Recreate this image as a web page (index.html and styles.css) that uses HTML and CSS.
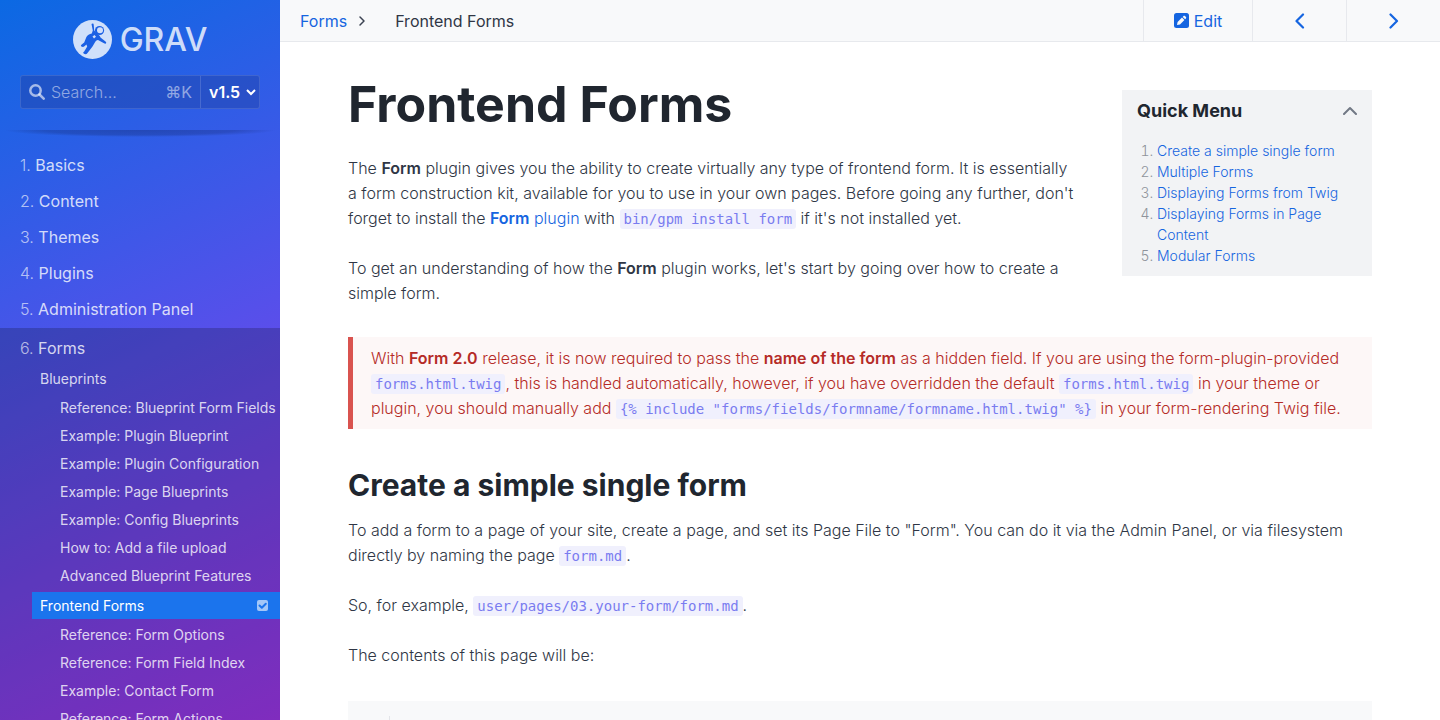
FILE: index.html
```html
<!DOCTYPE html>
<html lang="en">
<head>
  <meta charset="UTF-8">
  <meta name="viewport" content="width=device-width, initial-scale=1.0">
  <title>Frontend Forms</title>
  <link rel="stylesheet" href="styles.css">
</head>
<body>
  <aside class="sidebar">
    <header class="sidebar-header">
      <a class="logo" href="#">
        <svg class="logo-mark" viewBox="0 0 39 39" aria-hidden="true">
          <circle cx="19.5" cy="19.5" r="19.5" fill="currentColor"/>
          <g class="astronaut">
            <path d="M18.500 4c1-1 2.200-.6 2.200.8l.5 5.700 2.300 2.500c2 2 3.500 2.500 4 4.500l5 4c1.500 1.300.5 2.600-1 2l-6.500-3.500c-1.500 0-2.500 1-3 2.300l-2.500 4.200-5 6.500c-1 1.500-2.500 1.500-3.800.5-.8-.8-.5-1.500.5-2l3-5-.8-2-2 1.800c-1 1-2 .8-3 .2-.8-.7-.5-1.500.3-2l2.500-2 2.200-5.500c1-2 3-3 5.400-3.500l1-3z"/>
            <circle cx="26.500" cy="10.500" r="4.600"/>
            <circle class="visor" cx="27" cy="10.300" r="3"/>
            <path class="visor" d="M19.500 16.500l2-1.500 1.500 1.800-2 1.700z"/>
          </g>
        </svg>
        <span class="logo-text">GRAV</span>
      </a>
      <form class="search">
        <svg class="icon-search" viewBox="0 0 16 16" aria-hidden="true"><circle cx="6.500" cy="6.500" r="5.200"/><path d="M10.500 10.500l4.200 4.200"/></svg>
        <input type="search" placeholder="Search..." aria-label="Search">
        <kbd>⌘K</kbd>
        <select aria-label="Version">
          <option>v1.5</option>
          <option>v1.6</option>
          <option>v1.7</option>
        </select>
      </form>
    </header>
    <nav class="menu">
      <ul class="chapters">
        <li><a href="#"><b>1.</b> Basics</a></li>
        <li><a href="#"><b>2.</b> Content</a></li>
        <li><a href="#"><b>3.</b> Themes</a></li>
        <li><a href="#"><b>4.</b> Plugins</a></li>
        <li><a href="#"><b>5.</b> Administration Panel</a></li>
        <li class="parent">
          <a href="#"><b>6.</b> Forms</a>
          <ul class="pages">
            <li>
              <a href="#">Blueprints</a>
              <ul>
                <li><a href="#">Reference: Blueprint Form Fields</a></li>
                <li><a href="#">Example: Plugin Blueprint</a></li>
                <li><a href="#">Example: Plugin Configuration</a></li>
                <li><a href="#">Example: Page Blueprints</a></li>
                <li><a href="#">Example: Config Blueprints</a></li>
                <li><a href="#">How to: Add a file upload</a></li>
                <li><a href="#">Advanced Blueprint Features</a></li>
              </ul>
            </li>
            <li>
              <a class="active" href="#">Frontend Forms
                <svg class="icon-read" viewBox="0 0 11 11" aria-hidden="true"><rect width="11" height="11" rx="2"/><path d="M2.500 5.500l2.300 2.300 4-4"/></svg>
              </a>
              <ul>
                <li><a href="#">Reference: Form Options</a></li>
                <li><a href="#">Reference: Form Field Index</a></li>
                <li><a href="#">Example: Contact Form</a></li>
                <li><a href="#">Reference: Form Actions</a></li>
              </ul>
            </li>
          </ul>
        </li>
      </ul>
    </nav>
  </aside>

  <div class="page">
    <div class="topbar">
      <nav class="breadcrumbs">
        <a href="#">Forms</a>
        <svg viewBox="0 0 10 12" aria-hidden="true"><path d="M3 2l4 4-4 4"/></svg>
        <span>Frontend Forms</span>
      </nav>
      <a class="edit" href="#">
        <svg viewBox="0 0 15 15" aria-hidden="true"><rect width="15" height="15" rx="2.500" fill="currentColor"/><path d="M3 12l.6-3L8 4.600 10.400 7 6 11.400z M8.700 3.900l.8-.8c.5-.5 1-.5 1.500 0l.9.9c.5.5.5 1 0 1.500l-.8.800z" fill="#f8f9fa"/></svg>
        Edit
      </a>
      <a class="arrow" href="#" aria-label="Previous"><svg viewBox="0 0 10 16"><path d="M8 1.500L1.500 8 8 14.500"/></svg></a>
      <a class="arrow" href="#" aria-label="Next"><svg viewBox="0 0 10 16"><path d="M1.500 1.500L8 8l-6.500 6.500"/></svg></a>
    </div>

    <main class="content">
      <section class="quick-menu">
        <div class="quick-head">
          <h3>Quick Menu</h3>
          <button type="button" aria-label="Collapse"><svg viewBox="0 0 14 9"><path d="M1 8l6-6 6 6"/></svg></button>
        </div>
        <ol>
          <li><a href="#simple">Create a simple single form</a></li>
          <li><a href="#">Multiple Forms</a></li>
          <li><a href="#">Displaying Forms from Twig</a></li>
          <li><a href="#">Displaying Forms in Page Content</a></li>
          <li><a href="#">Modular Forms</a></li>
        </ol>
      </section>

      <h1>Frontend Forms</h1>
      <p>The <strong>Form</strong> plugin gives you the ability to create virtually any type of frontend form. It is essentially a form construction kit, available for you to use in your own pages. Before going any further, don't forget to install the <a href="#"><strong>Form</strong> plugin</a> with <code>bin/gpm install form</code> if it's not installed yet.</p>
      <p>To get an understanding of how the <strong>Form</strong> plugin works, let's start by going over how to create a simple form.</p>
      <div class="notice">
        <p>With <strong>Form 2.0</strong> release, it is now required to pass the <strong>name of the form</strong> as a hidden field. If you are using the form-plugin-provided <code>forms.html.twig</code>, this is handled automatically, however, if you have overridden the default <code>forms.html.twig</code> in your theme or plugin, you should manually add <code>{% include "forms/fields/formname/formname.html.twig" %}</code> in your form-rendering Twig file.</p>
      </div>

      <h2 id="simple">Create a simple single form</h2>
      <p>To add a form to a page of your site, create a page, and set its Page File to "Form". You can do it via the Admin Panel, or via filesystem directly by naming the page <code>form.md</code>.</p>
      <p>So, for example, <code>user/pages/03.your-form/form.md</code>.</p>
      <p>The contents of this page will be:</p>
      <div class="code-block"><div class="code-lines"></div></div>
    </main>
  </div>
</body>
</html>
```
FILE: styles.css
```css
* {
  box-sizing: border-box;
}

body {
  display: flex;
  height: 100vh;
  margin: 0;
  overflow: hidden;
  font-family: Inter, 'Liberation Sans', sans-serif;
  font-size: 16px;
  line-height: 25px;
  color: #2f3645;
  background: #fff;
}

a {
  color: #1565e0;
  text-decoration: none;
}

ul, ol {
  margin: 0;
  padding: 0;
}

ul {
  list-style: none;
}

svg {
  flex: none;
  fill: none;
  stroke-linecap: round;
  stroke-linejoin: round;
}

/* Sidebar */
.sidebar {
  flex: 0 0 280px;
  overflow: hidden;
  color: rgba(255, 255, 255, 0.8);
  background: linear-gradient(155deg, #0b69e3 0%, #5550ea 50%, #a038ee 100%);
}

.sidebar a {
  color: inherit;
}

.sidebar-header {
  height: 130px;
  padding: 20px 20px 0;
}

.logo {
  display: flex;
  justify-content: center;
  align-items: center;
  gap: 8px;
  height: 39px;
  margin-bottom: 16px;
}

.logo-mark {
  width: 39px;
  height: 39px;
}

.astronaut {
  fill: #1c60e4;
}

.visor {
  fill: #d2dffa;
}

.logo-text {
  font-size: 32px;
  font-weight: 500;
}

.search {
  display: flex;
  align-items: center;
  height: 34px;
  padding-left: 8px;
  border: 1px solid rgba(255, 255, 255, 0.12);
  border-radius: 3px;
  background: rgba(34, 68, 170, 0.5);
}

.icon-search {
  width: 16px;
  height: 16px;
  stroke: rgba(255, 255, 255, 0.6);
  stroke-width: 2.5;
}

.search input {
  flex: 1;
  min-width: 0;
  padding: 0 6px;
  border: 0;
  outline: 0;
  font: inherit;
  font-weight: 300;
  color: #fff;
  background: none;
}

.search input::placeholder {
  color: rgba(255, 255, 255, 0.5);
}

.search kbd {
  padding-right: 8px;
  font-family: inherit;
  color: rgba(255, 255, 255, 0.5);
}

.search select {
  width: 59px;
  height: 32px;
  padding: 0 0 0 4px;
  border: 0;
  border-left: 1px solid rgba(255, 255, 255, 0.15);
  font: inherit;
  font-weight: 600;
  color: #fff;
  background: none;
}

.menu {
  padding-top: 17px;
  background: radial-gradient(farthest-side at 50% 0, rgba(20, 40, 110, 0.4), rgba(20, 40, 110, 0.3) 70%, transparent) center top / 272px 7px no-repeat;
}

.chapters > li > a {
  display: block;
  padding: 0 20px;
  line-height: 36px;
}

.chapters b {
  font-weight: 300;
  opacity: 0.8;
}

.parent {
  margin-top: 1px;
  padding-top: 3px;
  background: rgba(0, 0, 0, 0.2);
}

.chapters > .parent > a {
  line-height: 34px;
}

.pages {
  padding-left: 32px;
  font-size: 14px;
}

.pages a {
  display: flex;
  justify-content: space-between;
  align-items: center;
  height: 27px;
  margin-bottom: 1px;
  padding-left: 8px;
  white-space: nowrap;
}

.pages ul {
  padding: 1px 0 2px 20px;
}

.pages .active {
  padding-right: 12px;
  color: #fff;
  background: #1b74ed;
}

.icon-read {
  width: 11px;
  height: 11px;
  fill: rgba(255, 255, 255, 0.6);
}

.icon-read path {
  fill: none;
  stroke: #1b74ed;
  stroke-width: 2;
}

/* Page */
.page {
  flex: 1;
  min-width: 0;
}

.topbar {
  display: flex;
  height: 42px;
  line-height: 26px;
  border-bottom: 1px solid #e7e9ed;
  background: #f8f9fa;
}

.breadcrumbs {
  display: flex;
  flex: 1;
  align-items: center;
  padding-left: 20px;
}

.breadcrumbs svg {
  width: 10px;
  height: 12px;
  margin: 0 28px 0 10px;
  stroke: #3b4351;
  stroke-width: 1.5;
}

.edit, .arrow {
  display: flex;
  justify-content: center;
  align-items: center;
  gap: 5px;
  width: 94px;
  border-left: 1px solid #e7e9ed;
}

.edit {
  width: 109px;
}

.edit svg {
  width: 15px;
  height: 15px;
}

.arrow svg {
  width: 10px;
  height: 16px;
  stroke: currentColor;
  stroke-width: 2.2;
}

.content {
  padding: 36px 68px 0;
  font-weight: 300;
}

h1, h2, h3 {
  margin: 0;
  font-weight: 700;
  color: #20262f;
}

h1 {
  margin-bottom: 26px;
  font-size: 50px;
  line-height: 52px;
}

h2 {
  margin-bottom: 13px;
  font-size: 30px;
  line-height: 40px;
}

p {
  margin: 0 0 25px;
}

strong {
  font-weight: 600;
}

code {
  padding: 2px 4px;
  border-radius: 3px;
  font-family: 'DejaVu Sans Mono', monospace;
  font-size: 14px;
  line-height: 16px;
  color: #7a7cf0;
  background: #f0f0fd;
}

.quick-menu {
  float: right;
  width: 250px;
  margin: 12px 0 20px 42px;
  padding: 0 15px 10px;
  background: #f2f3f5;
}

.quick-head {
  display: flex;
  justify-content: space-between;
  align-items: center;
  height: 41px;
  margin-bottom: 9px;
}

.quick-head h3 {
  font-size: 18px;
}

.quick-head button {
  display: flex;
  padding: 0;
  border: 0;
  background: none;
}

.quick-head svg {
  width: 14px;
  height: 9px;
  stroke: #727885;
  stroke-width: 2;
}

.quick-menu ol {
  padding-left: 20px;
  font-size: 14px;
  line-height: 21px;
}

.quick-menu li::marker {
  color: #8f939b;
}

.notice {
  margin: 31px 0 36px;
  padding: 9px 18px 8px;
  border-left: 5px solid #d9534f;
  color: #b52b27;
  background: #fdf7f7;
}

.notice p {
  margin: 0;
}

.code-block {
  margin-top: 33px;
  padding: 15px 0 0 41px;
  background: #f8f9fa;
}

.code-lines {
  height: 80px;
  border-left: 1px solid #e3e5e9;
}
```
